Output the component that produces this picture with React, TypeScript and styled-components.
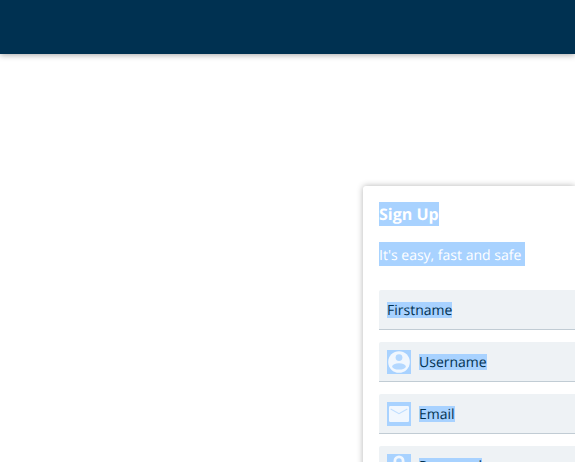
import React from "react";
import styled, { createGlobalStyle } from "styled-components";

const Global = createGlobalStyle`
  html, body { margin: 0; padding: 0; height: 100%; overflow: hidden; background: #fff; }
  #root { height: 100%; }
`;

const Page = styled.div`
  width: 575px;
  height: 462px;
  overflow: hidden;
  font-family: "Open Sans", "Noto Sans", sans-serif;
  text-rendering: geometricPrecision;
  display: flex;
  flex-direction: column;
`;

const Header = styled.header`
  flex: none;
  height: 54px;
  background: #003151;
  box-shadow: 0 1px 6px rgba(0, 0, 0, 0.35);
`;

const Main = styled.main`
  display: flex;
  justify-content: flex-end;
  padding-top: 132px;
`;

const Card = styled.section`
  width: 212px;
  flex: none;
  height: 400px;
  padding: 16px 0 0 16px;
  box-sizing: border-box;
  background: #fff;
  border-radius: 3px 0 0 0;
  box-shadow: 0 0 6px rgba(0, 0, 0, 0.3);
`;

const Mark = styled.span<{ $tall?: number; $trail?: number; $drop?: number }>`
  display: inline-block;
  vertical-align: top;
  background: #a8d2ff;
  height: ${(p) => p.$tall ?? 16}px;
  line-height: ${(p) => (p.$tall ?? 16) + (p.$drop ?? 2)}px;
  padding-right: ${(p) => p.$trail ?? 0}px;
`;

const Title = styled.h1`
  margin: 0;
  font-size: 16px;
  font-weight: 700;
  line-height: 24px;
  color: #fff;
`;

const Subtitle = styled.p`
  margin: 16px 0 24px;
  font-size: 14px;
  line-height: 24px;
  color: #fff;
`;

const Fields = styled.div`
  display: flex;
  flex-direction: column;
  gap: 12px;
`;

const Field = styled.div`
  height: 40px;
  box-sizing: border-box;
  display: flex;
  align-items: center;
  gap: 8px;
  padding: 0 0 0 8px;
  background: #eef2f5;
  border-bottom: 1px solid #c1ccd4;
  border-radius: 2px 0 0 0;
  font-size: 14px;
  color: #003151;
`;

const IconBox = styled.span`
  flex: none;
  width: 24px;
  height: 24px;
  display: block;
  background: #a8d2ff;
`;

const Icon = styled.svg`
  display: block;
  width: 24px;
  height: 24px;
`;

const UserIcon = () => (
  <IconBox>
    <Icon viewBox="0 0 24 24">
      <circle cx="12" cy="12" r="10.8" fill="#f1f7fe" />
      <circle cx="12" cy="7.6" r="3.4" fill="#b4d8ff" />
      <ellipse cx="12" cy="16.4" rx="6.8" ry="3.2" fill="#b4d8ff" />
    </Icon>
  </IconBox>
);

const MailIcon = () => (
  <IconBox>
    <Icon viewBox="0 0 24 24">
      <rect x="2" y="4" width="20" height="16" rx="1.2" fill="#f1f7fe" />
      <path fill="none" stroke="#c0deff" strokeWidth="1.1" d="M3.700 7 12 11.700 20.300 7" />
    </Icon>
  </IconBox>
);

const LockIcon = () => (
  <IconBox>
    <Icon viewBox="0 0 24 24">
      <path
        fill="#f1f7fe"
        fillRule="evenodd"
        d="M12 1.500a5.500 5.500 0 0 0-5.500 5.500V10H5.500A1.500 1.500 0 0 0 4 11.500v10A1.500 1.500 0 0 0 5.500 23h13a1.500 1.500 0 0 0 1.500-1.500v-10a1.500 1.500 0 0 0-1.500-1.500h-1V7A5.500 5.500 0 0 0 12 1.500ZM9.300 7a2.700 2.700 0 0 1 5.400 0v3H9.300V7Z"
      />
    </Icon>
  </IconBox>
);

export default function App() {
  return (
    <Page>
      <Global />
      <Header />
      <Main>
        <Card>
          <Title>
            <Mark $tall={24} $drop={0}>Sign Up</Mark>
          </Title>
          <Subtitle>
            <Mark $tall={24} $trail={4} $drop={3}>It's easy, fast and safe</Mark>
          </Subtitle>
          <Fields>
            <Field>
              <Mark>Firstname</Mark>
            </Field>
            <Field>
              <UserIcon />
              <Mark>Username</Mark>
            </Field>
            <Field>
              <MailIcon />
              <Mark>Email</Mark>
            </Field>
            <Field>
              <LockIcon />
              <Mark>Password</Mark>
            </Field>
          </Fields>
        </Card>
      </Main>
    </Page>
  );
}
